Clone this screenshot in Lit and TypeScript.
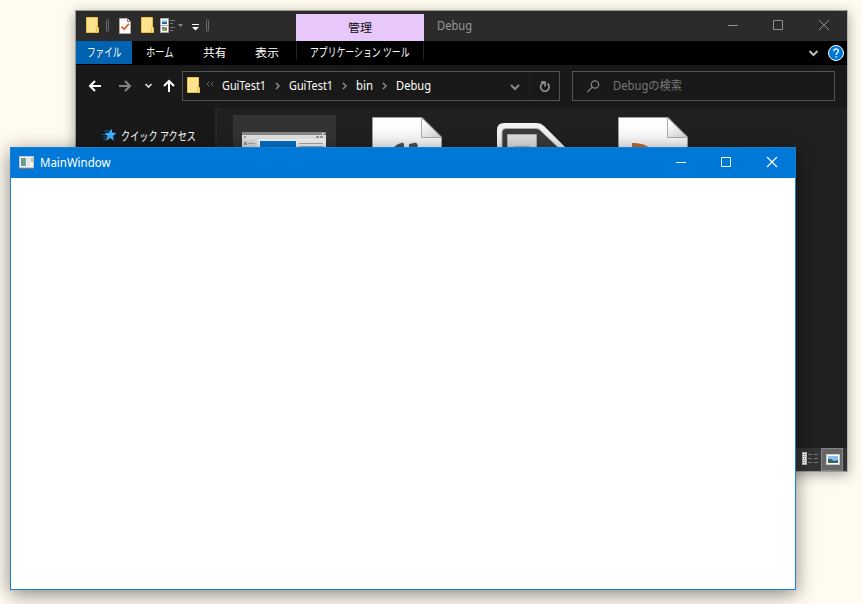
import { LitElement, html, css, svg } from "lit";
import { customElement } from "lit/decorators.js";

/** One line of text fitted to an exact width; the baseline is 13px below the top. */
const label = (text: string, width: number, cls = "") => html`
  <svg class="label ${cls}" width=${width} height="18">
    <text x="0" y="13" textLength=${width} lengthAdjust="spacingAndGlyphs">${text}</text>
  </svg>`;

const folder = html`<svg class="folder" width="14" height="16" viewBox="0 0 14 16">
  <path d="M.5.500h11v10h1v5H.5z" fill="#ffe28d" stroke="#eec13c" />
  <path d="M10.500 15v-4.500h1" fill="none" stroke="#eec13c" />
</svg>`;

const divider = html`<svg class="divider" width="3" height="14" viewBox="0 0 3 14">
  <rect x=".5" y=".5" width="2" height="12" rx="1" fill="none" stroke="#6b6b6b" />
</svg>`;

const page = svg`
  <defs>
    <linearGradient id="paper" x1="0" y1="0" x2="0" y2="1">
      <stop offset="0" stop-color="#fff" /><stop offset="1" stop-color="#e0e0e0" />
    </linearGradient>
    <linearGradient id="fold" x1="0" y1="0" x2="1" y2="1">
      <stop offset=".2" stop-color="#fafafa" /><stop offset="1" stop-color="#cfcfcf" />
    </linearGradient>
  </defs>
  <path d="M.5.5H50L69.500 20V90H.5z" fill="url(#paper)" stroke="#9b9b9b" />
  <path d="M49.500.5v20h20z" fill="url(#fold)" stroke="#aaa" />`;

const chevronRight = html`<svg class="crumb" width="5" height="8" viewBox="0 0 5 8">
  <path d="M1 1l3 3-3 3" fill="none" stroke="#8c8c8c" stroke-width="1.500" />
</svg>`;

@customElement("explorer-window")
export class ExplorerWindow extends LitElement {
  static styles = css`
    :host { display: flex; flex-direction: column; box-sizing: border-box; background: #191919;
      border: 1px solid #989b93; border-right-color: #b3b3ad; box-shadow: 0 3px 12px rgba(0, 0, 0, .34);
      font: 12px "Noto Sans", "Noto Sans CJK JP", sans-serif; }
    svg { display: block; flex: none; overflow: visible; }
    .label { fill: #fff; }
    .label.dark { fill: #111; }
    .label.kanji { font-size: 11.5px; }
    .label.dim { fill: #999; }
    .label.faint { fill: #777; }
    .title { display: flex; height: 30px; background: #2b2b2b; flex: none; }
    .quick { display: flex; width: 220px; }
    .quick .folder { margin: 6px 0 0 10px; }
    .divider { margin: 8px 0 0 6px; }
    .more + .divider { margin-left: 7px; }
    .check { margin: 7px 0 0 10px; }
    .props { margin: 7px 0 0 5px; }
    .more { margin: 13px 0 0 6px; }
    .context { width: 128px; height: 27px; margin-top: 3px; background: #e8c7fa; display: flex; justify-content: center; }
    .context .label { margin-top: 5px; }
    .name { padding: 6px 0 0 13px; flex: 1; }
    .ribbon { display: flex; height: 24px; background: #000; flex: none; align-items: flex-start; }
    .file { width: 56px; height: 23px; background: #0063b1; display: flex; box-sizing: border-box; padding-left: 11px; }
    .ribbon .label { margin-top: 3px; }
    .tabs { display: flex; width: 164px; padding-left: 14px; box-sizing: border-box; gap: 29px; }
    .tool { width: 128px; height: 19px; display: flex; box-sizing: border-box; padding-left: 13px;
      border-left: 1px solid #222; border-right: 1px solid #222; }
    .end { margin-left: auto; }
    .nav { display: flex; height: 43px; flex: none; }
    .box { box-sizing: border-box; height: 30px; margin-top: 6px; border: 1px solid #535353; display: flex; }
    .address { width: 378px; }
    .address .folder { margin: 5px 0 0 4px; }
    .address .label { margin-top: 5px; }
    .root { margin: 9px 8px 0 5px; }
    .crumb { margin: 10px 9px 0 9px; }
    .reload { border-left: 1px solid #222; }
    .search { width: 263px; margin-left: 12px; }
    .search .label { margin: 5px 0 0 20px; }
    .body { display: flex; flex: 1; min-height: 0; }
    .side { width: 141px; border-right: 2px solid #282828; padding: 19px 0 0 26px; display: flex; gap: 4px; box-sizing: border-box; }
    .side .label { margin-top: 1px; }
    .files { flex: 1; background: #202020; display: flex; align-items: flex-start; }
    .tile { width: 103px; height: 130px; margin: 7px 0 0 16px; background: #333; }
    .tile svg { margin: 17px 0 0 9px; }
    .doc { margin: 9px 0 0 36px; }
    .tag { margin: 15px 0 0 55px; }
    .doc.last { margin-left: 51px; }
    .status { height: 23px; background: #333; display: flex; justify-content: flex-end; padding-right: 4px; flex: none; }
    .view { width: 22px; height: 23px; background: #666; border: 1px solid #858585; box-sizing: border-box; margin-left: 2px; }
  `;

  render() {
    return html`
      <div class="title">
        <div class="quick">
          ${folder}
          ${divider}
          <svg class="check" width="12" height="16" viewBox="0 0 12 16">
            <path d="M.5.5h8l3 3v12H.5z" fill="#fafafa" stroke="#aaa" /><path d="M8.500.5v3h3" fill="none" stroke="#777" />
            <path d="M2.500 8.500l2.600 2.800 4.800-5.600" fill="none" stroke="#df5a22" stroke-width="1.700" />
          </svg>
          ${folder}
          <svg class="props" width="26" height="16" viewBox="0 0 26 16">
            <path d="M.5.5h8v7h-8zM.5 7.500h8v7h-8z" fill="#fff" stroke="#aaa" />
            <path d="M2 2h5v2H2z" fill="#9dcbff" /><path d="M2 4h5v2H2z" fill="#286c9e" />
            <path d="M2 9h5v4H2z" fill="#82b95b" /><path d="M2 9h2v2H2z" fill="#3478c7" /><path d="M5 10h2v2H5z" fill="#d9552b" />
            <path d="M10 2.500h5M10 5.500h3M10 9.500h5M10 12.500h3" stroke="#777" />
            <path d="M18 6h5l-2.500 3z" fill="#888" />
          </svg>
          <svg class="more" width="7" height="8" viewBox="0 0 7 8"><path d="M0 .5h7" stroke="#fff" /><path d="M0 3h7L3.500 6.500z" fill="#fff" /></svg>
          ${divider}
        </div>
        <div class="context">${label("管理", 24, "dark kanji")}</div>
        <div class="name">${label("Debug", 35, "dim")}</div>
        <svg width="120" height="30" viewBox="727 11 120 30" fill="none" stroke="#909090">
          <path d="M728 25.500h10M773.500 20.500h9v9h-9zM819 20l10 10M829 20l-10 10" />
        </svg>
      </div>
      <div class="ribbon">
        <div class="file">${label("ファイル", 34.5)}</div>
        <div class="tabs">${label("ホーム", 27.5)}${label("共有", 23.5, "kanji")}${label("表示", 24, "kanji")}</div>
        <div class="tool">${label("アプリケーション ツール", 99.5)}</div>
        <svg class="end" width="40" height="24" viewBox="807 41 40 24">
          <path d="M809.500 51l4 4 4-4" fill="none" stroke="#bbb" stroke-width="2" />
          <circle cx="836" cy="53" r="7.500" fill="#0078d7" stroke="#fff" />
          <path d="M833.800 51.200c0-3 4.600-3 4.600-.2 0 1.700-2.200 1.800-2.200 3.900M836.200 56v1.500" fill="none" stroke="#fff" stroke-width="1.300" />
        </svg>
      </div>
      <div class="nav">
        <svg width="106" height="43" viewBox="76 65 106 43" fill="none" stroke="#fff" stroke-width="2">
          <path d="M101 86H90M95 81l-5 5 5 5" />
          <path d="M119 86h11M125 81l5 5-5 5" stroke="#858585" />
          <path d="M145.500 84l3 3 3-3" stroke="#ddd" stroke-width="1.700" />
          <path d="M169 92V81M164 86l5-5 5 5" />
        </svg>
        <div class="box address">
          ${folder}
          <svg class="root" width="8" height="6" viewBox="0 0 8 6"><path d="M3.500.5L1 3l2.500 2.500M7.500.5L5 3l2.500 2.500" fill="none" stroke="#666" /></svg>
          ${label("GuiTest1", 44)}${chevronRight}${label("GuiTest1", 44)}${chevronRight}${label("bin", 17)}${chevronRight}${label("Debug", 35)}
          <svg class="end" width="20" height="28" viewBox="509 72 20 28"><path d="M511 85l4 4 4-4" fill="none" stroke="#888" stroke-width="2" /></svg>
          <svg class="reload" width="29" height="28" viewBox="529 72 29 28">
            <path d="M546.500 83.500a4.300 4.300 0 1 1-3.500-.8M540 82h4v4.500" fill="none" stroke="#999" stroke-width="1.600" />
          </svg>
        </div>
        <div class="box search">
          <svg width="20" height="28" viewBox="573 72 20 28" fill="none" stroke="#8a8a8a" stroke-width="1.200">
            <circle cx="595" cy="84.500" r="3.700" /><path d="M592.300 87.200l-5 5" />
          </svg>
          ${label("Debugの検索", 69, "faint")}
        </div>
      </div>
      <div class="body">
        <div class="side">
          <svg width="15" height="15" viewBox="0 0 15 15">
            <path d="M2 4h7M0 7.500h5M1.500 10h4M1 12.500h4" stroke="#12618f" />
            <path d="M9.500 1.800l.8 3.900 4.100.3-3.400 2.900.9 4.800-3.700-2.600-4.200 2.600 1.600-4.700L2.800 6.200l4.300-.4z" fill="#3cb2ff" />
          </svg>
          ${label("クイック アクセス", 75)}
        </div>
        <div class="files">
          <div class="tile">
            <svg width="84" height="60" viewBox="0 0 84 60">
              <path d="M0 0h84v60H0z" fill="#f4f4f4" /><path d="M0 0h84v3H0z" fill="#888" />
              <path d="M0 3h84v4H0z" fill="#e2e2e2" /><path d="M0 7h15v50H0z" fill="#dcdcdc" />
              <path d="M2 4h2v2H2zM74 4h3v2h-3zM78 4h3v2h-3zM2 10h3v3H2z" fill="#999" />
              <path d="M6 11.500h7M57 11.500h24M57 14.500h24" stroke="#a5a9ac" />
              <path d="M18 9h36v30H18z" fill="#0072c9" /><path d="M80 1.500h2" stroke="#fff" />
            </svg>
          </div>
          <svg class="doc" width="70" height="90">${page}
            <path d="M22 30l4-3 5-1.500 1 2V36H22zM37 27l7-1.500 2 3-4 8h-5z" fill="#4a5358" />
          </svg>
          <svg class="tag" width="70" height="80">
            <path d="M0 80V7Q0 0 7 0H40Q44 0 47 3L75 31V80z" fill="#f1f1f1" />
            <path d="M5 80V9Q5 5.500 9 5.500H39Q42 5.500 44 8L68 31V80z" fill="#3b3b3b" stroke="#aaa" />
            <path d="M10.500 11.500h29V60h-29z" fill="#ddd" stroke="#aaa" /><path d="M17 23.500h16" stroke="#aaa" />
          </svg>
          <svg class="doc last" width="70" height="90">${page}
            <path d="M14 26q10-1 20 6l5 6H14z" fill="#c4692d" />
          </svg>
        </div>
      </div>
      <div class="status">
        <svg width="17" height="23" viewBox="802 448 17 23">
          <path d="M802 452h5v13h-5z" fill="#bbb" />
          <path d="M803 453h3v3h-3zM803 457h3v3h-3zM803 461h3v3h-3z" fill="#fff" />
          <path d="M804 454h1v1h-1z" fill="#333" /><path d="M804 458h1v1h-1z" fill="#06f" /><path d="M804 462h1v1h-1z" fill="#d00" />
          <path d="M808 454.500h4m2 0h4M808 458.500h4m2 0h4M808 462.500h4m2 0h4" stroke="#777" />
        </svg>
        <div class="view">
          <svg width="20" height="21" viewBox="822 449 20 21">
            <path d="M826.500 454.500h13v10h-13z" fill="#fff" stroke="#ccc" /><path d="M828 456h10v7h-10z" fill="#8bbcf2" />
            <path d="M828 459l3 0 3 2 4-1v3h-10z" fill="#38664f" /><path d="M833 462h5v1h-5z" fill="#27609f" />
          </svg>
        </div>
      </div>`;
  }
}

@customElement("main-window")
export class MainWindow extends LitElement {
  static styles = css`
    :host { display: block; box-sizing: border-box; background: #fff; border: 1px solid #1a80d2;
      box-shadow: 0 4px 18px rgba(0, 0, 0, .48); font: 12px "Noto Sans", sans-serif; }
    .bar { display: flex; height: 30px; background: #0078d7; }
    svg { display: block; flex: none; }
    .icon { margin: 8px 6px 0 8px; }
    .label { fill: #fff; margin-top: 6px; overflow: visible; }
    .controls { margin-left: auto; }
  `;

  render() {
    return html`<div class="bar">
      <svg class="icon" width="15" height="13" viewBox="0 0 15 13">
        <path d="M.5.5h14v11H.5z" fill="#f3f3f3" stroke="#c9c9c9" /><path d="M0 12.500h15" stroke="#777" />
        <path d="M2 2h5v8H2z" fill="#6aa58c" /><path d="M2 2h2v8H2z" fill="#6a91a8" />
        <path d="M8 2h3v8H8z" fill="#e4e4e4" /><path d="M12 2h2v4h-2z" fill="#bbb" />
      </svg>
      ${label("MainWindow", 70.5)}
      <svg class="controls" width="125" height="30" viewBox="670 148 125 30" fill="none" stroke="#fff">
        <path d="M676 162.500h10M721.500 157.500h9v9h-9z" /><path d="M767 157l10 10M777 157l-10 10" stroke-width="1.200" />
      </svg>
    </div>`;
  }
}

@customElement("app-root")
export class AppRoot extends LitElement {
  static styles = css`
    :host { display: block; position: relative; width: 862px; height: 604px; overflow: hidden; background: #fffbf0; }
    explorer-window { position: absolute; left: 75px; top: 10px; width: 773px; height: 462px; }
    main-window { position: absolute; left: 10px; top: 147px; width: 786px; height: 443px; }
  `;

  render() {
    return html`<explorer-window></explorer-window><main-window></main-window>`;
  }
}
